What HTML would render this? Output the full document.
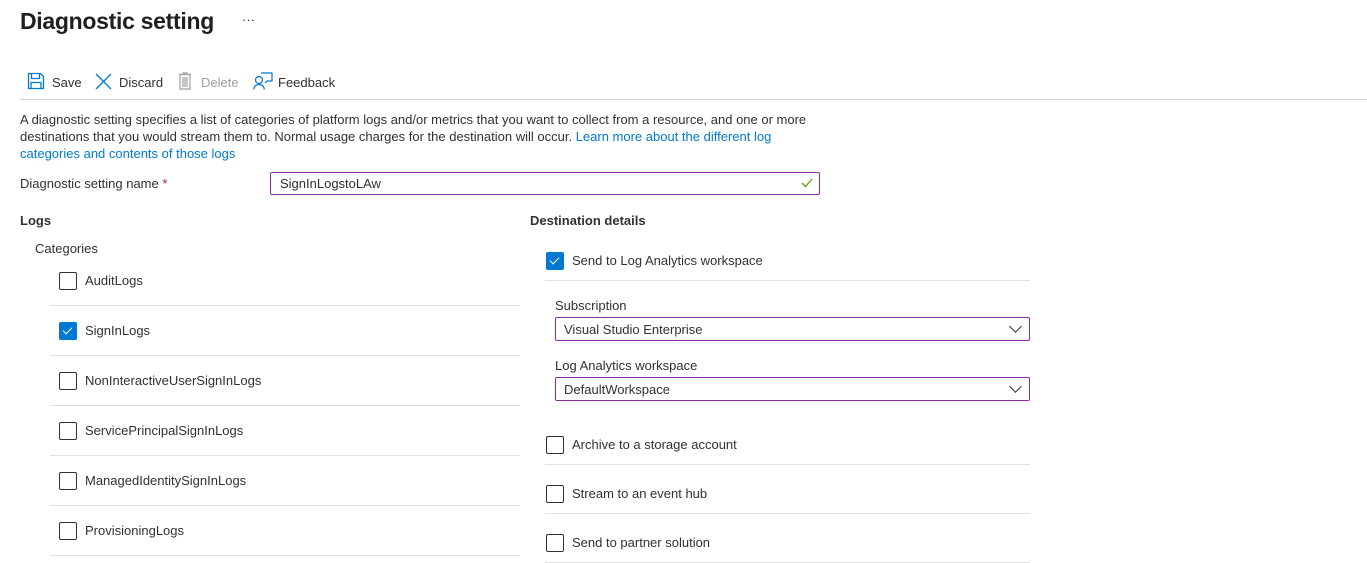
<!DOCTYPE html>
<html><head><style>
body{margin:0;width:1367px;height:563px;background:#fff;font-family:"Liberation Sans",sans-serif;color:#323130;font-size:13px;position:relative;overflow:hidden}
.a{position:absolute;white-space:nowrap}
.cb{position:absolute;width:16px;height:16px;border:1px solid #323130;border-radius:2px;background:#fff}
.cb.on{background:#0078d4;border-color:#0078d4}
.cb.on:after{content:"";position:absolute;left:5px;top:2px;width:4px;height:8px;border:solid #fff;border-width:0 1.3px 1.3px 0;transform:rotate(45deg)}
.hr{position:absolute;height:1px;background:#e1dfdd}
.inp{position:absolute;border:1px solid #8a2da5;height:22px;box-sizing:border-box;border-radius:2px}
.chev{position:absolute;right:9px;width:8px;height:8px;border:solid #323130;border-width:0 1.2px 1.2px 0;transform:rotate(45deg)}
</style></head><body>
<div class="a" style="left:20px;top:8px;font-size:23px;font-weight:600;color:#201f1e;letter-spacing:-0.3px">Diagnostic setting</div>
<div class="a" style="left:242px;top:12px;font-size:13px">···</div>

<svg class="a" style="left:27px;top:72px" width="18" height="18" viewBox="0 0 18 18" fill="none" stroke="#0078d4" stroke-width="1.3"><path d="M1.5 1.5h12l3 3v12h-15z"/><path d="M4.5 1.5v5h8v-5"/><path d="M4 16.5v-6h10v6"/></svg>
<div class="a" style="left:52px;top:75px">Save</div>
<svg class="a" style="left:95px;top:73px" width="17" height="17" viewBox="0 0 17 17" stroke="#0078d4" stroke-width="1.3"><path d="M1 1l15 15M16 1L1 16"/></svg>
<div class="a" style="left:119px;top:75px">Discard</div>
<svg class="a" style="left:178px;top:72px" width="14" height="18" viewBox="0 0 14 18" fill="none" stroke="#a19f9d" stroke-width="1.2"><path d="M1 2.5h12M5 2.5v-1.5h4v1.5M2 2.5v14.5h10V2.5M5 5v10M7 5v10M9 5v10"/></svg>
<div class="a" style="left:201px;top:75px;color:#a19f9d">Delete</div>
<svg class="a" style="left:253px;top:72px" width="20" height="18" viewBox="0 0 20 18" fill="none" stroke="#0078d4" stroke-width="1.2"><circle cx="6" cy="8" r="3.5"/><path d="M0.8 17.5c0-3 2.3-5 5.2-5s5.2 2 5.2 5"/><path d="M8 1h11v8h-5l-2 2"/></svg>
<div class="a" style="left:278px;top:75px">Feedback</div>
<div class="hr" style="left:20px;top:99px;width:1347px;background:#d2d0ce"></div>

<div class="a" style="left:20px;top:111px;line-height:17px;white-space:normal;width:795px">A diagnostic setting specifies a list of categories of platform logs and/or metrics that you want to collect from a resource, and one or more destinations that you would stream them to. Normal usage charges for the destination will occur. <span style="color:#0078d4">Learn more about the different log categories and contents of those logs</span></div>

<div class="a" style="left:20px;top:176px">Diagnostic setting name <span style="color:#a4262c">*</span></div>
<div class="inp" style="left:270px;top:172px;width:550px;height:23px"><span class="a" style="left:9px;top:3px">SignInLogstoLAw</span>
<svg class="a" style="right:6px;top:5px" width="12" height="10" viewBox="0 0 12 10" fill="none" stroke="#57a300" stroke-width="1.3"><path d="M1 5l3.5 3.5L11 1"/></svg></div>

<div class="a" style="left:20px;top:213px;font-weight:600">Logs</div>
<div class="a" style="left:35px;top:241px">Categories</div>

<div class="cb" style="left:59px;top:272px"></div><div class="a" style="left:85px;top:273px">AuditLogs</div>
<div class="hr" style="left:50px;top:305px;width:470px"></div>
<div class="cb on" style="left:59px;top:322px"></div><div class="a" style="left:85px;top:323px">SignInLogs</div>
<div class="hr" style="left:50px;top:355px;width:470px"></div>
<div class="cb" style="left:59px;top:372px"></div><div class="a" style="left:85px;top:373px">NonInteractiveUserSignInLogs</div>
<div class="hr" style="left:50px;top:405px;width:470px"></div>
<div class="cb" style="left:59px;top:422px"></div><div class="a" style="left:85px;top:423px">ServicePrincipalSignInLogs</div>
<div class="hr" style="left:50px;top:455px;width:470px"></div>
<div class="cb" style="left:59px;top:472px"></div><div class="a" style="left:85px;top:473px">ManagedIdentitySignInLogs</div>
<div class="hr" style="left:50px;top:505px;width:470px"></div>
<div class="cb" style="left:59px;top:522px"></div><div class="a" style="left:85px;top:523px">ProvisioningLogs</div>
<div class="hr" style="left:50px;top:555px;width:470px"></div>

<div class="a" style="left:530px;top:213px;font-weight:600">Destination details</div>
<div class="cb on" style="left:546px;top:252px"></div><div class="a" style="left:572px;top:253px">Send to Log Analytics workspace</div>
<div class="hr" style="left:545px;top:280px;width:485px"></div>
<div class="a" style="left:555px;top:298px">Subscription</div>
<div class="inp" style="left:555px;top:317px;width:475px;height:24px"><span class="a" style="left:8px;top:4px">Visual Studio Enterprise</span><div class="chev" style="top:4px"></div></div>
<div class="a" style="left:555px;top:358px">Log Analytics workspace</div>
<div class="inp" style="left:555px;top:377px;width:475px;height:24px"><span class="a" style="left:8px;top:4px">DefaultWorkspace</span><div class="chev" style="top:4px"></div></div>

<div class="cb" style="left:546px;top:436px"></div><div class="a" style="left:572px;top:437px">Archive to a storage account</div>
<div class="hr" style="left:545px;top:464px;width:485px"></div>
<div class="cb" style="left:546px;top:485px"></div><div class="a" style="left:572px;top:486px">Stream to an event hub</div>
<div class="hr" style="left:545px;top:513px;width:485px"></div>
<div class="cb" style="left:546px;top:534px"></div><div class="a" style="left:572px;top:535px">Send to partner solution</div>
<div class="hr" style="left:545px;top:562px;width:485px"></div>
</body></html>
